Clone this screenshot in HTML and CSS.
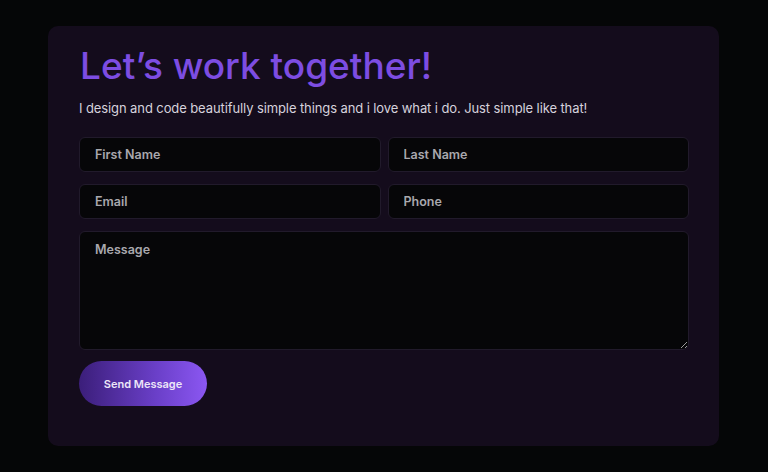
FILE: index.html
```html
<!DOCTYPE html>
<html lang="en">
<head>
<meta charset="utf-8">
<title>Contact</title>
<link rel="stylesheet" href="styles.css">
</head>
<body>
<main class="page">
  <section class="card">
    <h1 class="title">Let’s work together!</h1>
    <p class="lead">I design and code beautifully simple things and i love what i do. Just simple like that!</p>
    <form class="form">
      <div class="row">
        <input class="field" type="text" placeholder="First Name">
        <input class="field" type="text" placeholder="Last Name">
      </div>
      <div class="row">
        <input class="field" type="email" placeholder="Email">
        <input class="field" type="tel" placeholder="Phone">
      </div>
      <textarea class="field area" placeholder="Message"></textarea>
      <div class="actions">
        <button class="btn" type="button">Send Message</button>
      </div>
    </form>
  </section>
</main>
</body>
</html>
```
FILE: styles.css
```css
* { box-sizing: border-box; }
html, body { margin: 0; height: 100%; }
body {
  background: #050607;
  font-family: "Inter", "Noto Sans", sans-serif;
}
.page {
  padding: 26px 49px 26px 48px;
}
.card {
  background: #140c1c;
  border-radius: 10px;
  padding: 18px 30px 40px 31px;
  height: 420px;
}
.title {
  margin: 0;
  font-family: "Inter", "Noto Sans", sans-serif;
  font-weight: 500;
  font-size: 37px;
  line-height: 44px;
  color: #7d4de2;
  letter-spacing: 0;
  padding-left: 1px;
}
.lead {
  margin: 11px 0 0;
  font-family: "Inter", "Noto Sans", sans-serif;
  font-size: 13px;
  line-height: 18px;
  color: #d6d2dc;
  letter-spacing: -0.1px;
}
.form {
  margin-top: 20px;
  display: flex;
  flex-direction: column;
  gap: 12px;
}
.row {
  display: grid;
  grid-template-columns: 1fr 1fr;
  gap: 7px;
}
.field {
  display: block;
  width: 100%;
  height: 35px;
  background: #060608;
  border: 1px solid #211a2b;
  border-radius: 6px;
  padding: 0 15px;
  font-family: "Inter", sans-serif;
  font-weight: 600;
  font-size: 12.5px;
  color: #e0e0e0;
  outline: none;
}
.field::placeholder { color: #a9a8ae; }
.area {
  height: 119px;
  padding: 10px 15px;
  resize: vertical;
}
.actions { margin-top: -1px; }
.btn {
  width: 128px;
  height: 45px;
  border: 0;
  border-radius: 23px;
  background: linear-gradient(90deg, #3b1e7a 0%, #6a3fc8 60%, #8b57f2 100%);
  color: #ece6f8;
  font-family: "Inter", sans-serif;
  font-weight: 600;
  font-size: 11px;
  cursor: pointer;
}
```
